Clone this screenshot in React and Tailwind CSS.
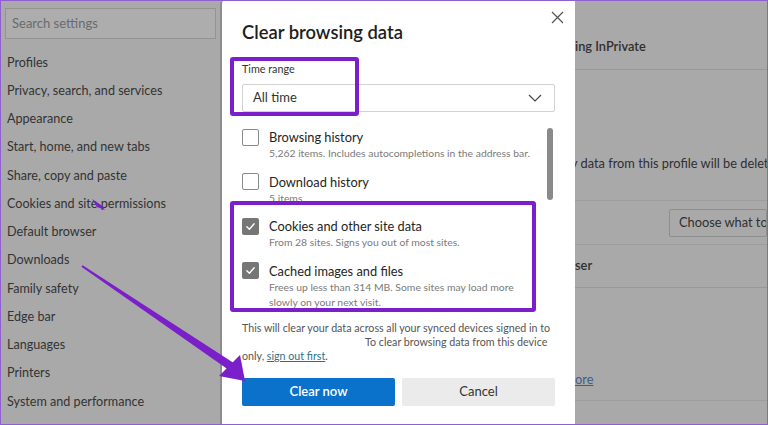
import React from "react";

const navItems = [
  "Profiles",
  "Privacy, search, and services",
  "Appearance",
  "Start, home, and new tabs",
  "Share, copy and paste",
  "Cookies and site permissions",
  "Default browser",
  "Downloads",
  "Family safety",
  "Edge bar",
  "Languages",
  "Printers",
  "System and performance",
];

function Checkbox({ checked }) {
  if (checked) {
    return (
      <div className="w-[17px] h-[17px] rounded-[2px] bg-[#767676] flex items-center justify-center shrink-0">
        <svg width="11" height="11" viewBox="0 0 12 12" fill="none">
          <path d="M2 6.3 L4.8 9 L10 3" stroke="white" strokeWidth="1.5" strokeLinecap="round" strokeLinejoin="round" />
        </svg>
      </div>
    );
  }
  return <div className="w-[17px] h-[17px] rounded-[2px] border border-[#8a8a8a] bg-white shrink-0" />;
}

function Item({ checked, title, sub }) {
  return (
    <div className="flex gap-[10px]">
      <div className="pt-[0.5px]">
        <Checkbox checked={checked} />
      </div>
      <div className="flex flex-col">
        <div className="text-[12.8px] leading-[18px] text-[#242424]">{title}</div>
        <div className="text-[10.4px] leading-[15px] text-[#7a7a7a]">{sub}</div>
      </div>
    </div>
  );
}

export default function App() {
  return (
    <div
      className="relative w-[768px] h-[425px] overflow-hidden bg-[#a9a9a9] border-[1.5px] border-[#8f5fcf]"
      style={{ fontFamily: 'Lato, "Noto Sans", sans-serif' }}
    >
      <div className="flex h-full">
        {/* Sidebar */}
        <div className="w-[219px] shrink-0 flex flex-col">
          <div className="mx-[4px] mt-[7px] h-[31px] border border-[#939393] bg-[#adadad] flex items-center px-[6px] text-[13px] text-[#6b6b6b]">
            Search settings
          </div>
          <div className="mt-[10px] flex flex-col">
            {navItems.map((n) => (
              <div key={n} className="h-[28.25px] flex items-center px-[6px] text-[12.6px] text-[#333333]">
                {n}
              </div>
            ))}
          </div>
        </div>

        {/* Dialog */}
        <div className="relative w-[355px] shrink-0 bg-white border-l-2 border-[#8c8c8c] rounded-tl-[3px] flex flex-col px-[20px]">
          <button className="absolute right-[11px] top-[9px] w-[14px] h-[14px] flex items-center justify-center">
            <svg width="13" height="13" viewBox="0 0 13 13">
              <path d="M1 1 L12 12 M12 1 L1 12" stroke="#555" strokeWidth="1.2" />
            </svg>
          </button>
          <div className="mt-[18px] text-[18.4px] font-semibold text-[#1e1e1e] leading-[26px]">Clear browsing data</div>
          <div className="mt-[17px] text-[10.8px] leading-[14px] text-[#333]">Time range</div>
          <div className="mt-[8px] h-[28px] shrink-0 border border-[#d2d2d2] rounded-[2px] flex items-center justify-between pl-[10px] pr-[12px]">
            <span className="text-[13px] text-[#333]">All time</span>
            <svg width="14" height="8" viewBox="0 0 14 8" fill="none">
              <path d="M1 1 L7 7 L13 1" stroke="#444" strokeWidth="1.2" />
            </svg>
          </div>
          <div className="relative mt-[16px] h-[190px] shrink-0">
            <div className="absolute right-[2px] top-[0px] w-[6px] h-[72px] rounded-full bg-[#8a8a8a]" />
            <div className="flex flex-col gap-[11.5px] pr-[12px]">
              <Item title="Browsing history" sub="5,262 items. Includes autocompletions in the address bar." />
              <Item title="Download history" sub="5 items" />
              <Item checked title="Cookies and other site data" sub="From 28 sites. Signs you out of most sites." />
              <Item checked title="Cached images and files" sub="Frees up less than 314 MB. Some sites may load more slowly on your next visit." />
            </div>
          </div>
          <div className="mt-[3px] text-[10.7px] leading-[14px] text-[#555] whitespace-nowrap">
            <div>This will clear your data across all your synced devices signed in to</div>
            <div className="pl-[123px]">To clear browsing data from this device</div>
            <div>
              only, <span className="text-[#2f6f8a] underline">sign out first</span>.
            </div>
          </div>
          <div className="mt-[15px] flex gap-[7px]">
            <button className="flex-1 h-[28px] rounded-[2px] bg-[#0b72cc] text-white text-[13px] font-semibold">Clear now</button>
            <button className="flex-1 h-[28px] rounded-[2px] bg-[#ebebeb] text-[#333] text-[13px]">Cancel</button>
          </div>
        </div>

        {/* Right content (behind dialog) */}
        <div className="flex-1 flex flex-col text-[12.8px] text-[#2f2f2f] whitespace-nowrap overflow-hidden">
          <div className="h-[69px] border-b border-[#989898] flex items-end pb-[13px] font-semibold">ing InPrivate</div>
          <div className="h-[131px] border-b border-[#9d9d9d] flex items-end pb-[27px] -ml-[4px]">y data from this profile will be delet</div>
          <div className="h-[44px] border-b border-[#9d9d9d] flex items-center justify-end">
            <div className="w-[98px] h-[28px] border border-[#8e8e8e] rounded-[2px] flex items-center pl-[9px] overflow-hidden">Choose what to</div>
          </div>
          <div className="h-[43px] border-b border-[#989898] flex items-center font-semibold">ser</div>
          <div className="h-[113px] border-b border-[#9d9d9d] flex items-end pb-[11px]">
            <span className="text-[#3d5f86] underline">ore</span>
          </div>
        </div>
      </div>

      {/* Purple highlight boxes */}
      <div className="absolute left-[229px] top-[56px] w-[129px] h-[59px] border-[4px] border-[#7a1fc9] rounded-[3px]" />
      <div className="absolute left-[229px] top-[200px] w-[306px] h-[111px] border-[4px] border-[#7a1fc9] rounded-[3px]" />

      {/* Arrows */}
      <svg className="absolute left-0 top-0 pointer-events-none" width="768" height="425">
        <path d="M80.4 265.8 L81.6 264.2 L233.5 362.5 L228.5 369.5 Z" fill="#7a1fc9" />
        <path d="M244 380 L218 375 L239 354 Z" fill="#7a1fc9" />
        <path d="M91 198 L100 204 L104 209 L96 206 Z" fill="#7a1fc9" />
      </svg>
    </div>
  );
}
